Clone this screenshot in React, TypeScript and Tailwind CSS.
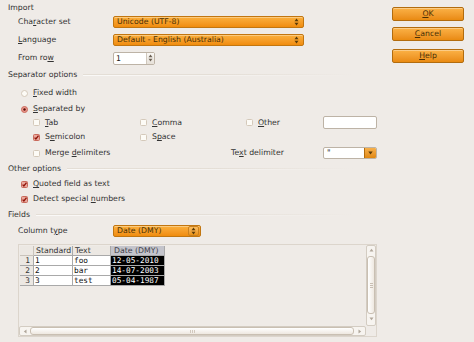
import React from "react";

function U({ children }: { children: React.ReactNode }) {
  return <span className="underline underline-offset-[1px] decoration-[0.5px]">{children}</span>;
}

function UpDown({ color = "#5a3a08" }: { color?: string }) {
  return (
    <svg width="5" height="8" viewBox="0 0 5 8">
      <path d="M0.5 3.2 L2.5 0.6 L4.5 3.2 Z" fill={color} />
      <path d="M0.5 4.8 L2.5 7.4 L4.5 4.8 Z" fill={color} />
    </svg>
  );
}

function Checkbox({ checked }: { checked?: boolean }) {
  return (
    <svg width="7" height="7" viewBox="0 0 7 7" className="shrink-0">
      <rect
        x="0.5"
        y="0.5"
        width="6"
        height="6"
        rx="1"
        fill={checked ? "#e9a89c" : "#fdfbf6"}
        stroke={checked ? "#c96a5c" : "#d4c9ba"}
      />
      {checked && <path d="M1.6 3.6 L2.9 5 L5.5 1.6" stroke="#8e1208" strokeWidth="1.3" fill="none" />}
    </svg>
  );
}

function Radio({ checked }: { checked?: boolean }) {
  return (
    <svg width="7" height="7" viewBox="0 0 7 7" className="shrink-0">
      <circle cx="3.5" cy="3.5" r="3" fill={checked ? "#ec9a90" : "#fdfbf6"} stroke={checked ? "#c96a5c" : "#d4c9ba"} />
      {checked && <circle cx="3.5" cy="3.5" r="1.2" fill="#5a0d06" />}
    </svg>
  );
}

function Header({ children }: { children: React.ReactNode }) {
  return (
    <div className="flex h-[16px] items-center">
      <span>{children}</span>
      <div className="ml-[6px] mr-[24px] flex-1">
        <div className="h-px bg-gradient-to-r from-[#e4ded6] via-[#e4ded6] to-transparent" />
        <div className="h-px bg-gradient-to-r from-white/70 to-transparent" />
      </div>
    </div>
  );
}

function Combo({ text, width }: { text: string; width: string }) {
  return (
    <div
      className={`${width} flex h-[12px] items-center justify-between rounded-[2px] border border-[#c27610] bg-gradient-to-b from-[#fbb03c] to-[#f08c0c] pl-[3px] pr-[4px] text-[#4a2f05] shadow-[inset_0_1px_0_rgba(255,255,255,0.35)]`}
    >
      <span className="leading-none">{text}</span>
      <UpDown />
    </div>
  );
}

function Button({ children }: { children: React.ReactNode }) {
  return (
    <div className="flex h-[14px] w-[72px] items-center justify-center rounded-[2px] border border-[#b26c0e] bg-gradient-to-b from-[#fbb245] to-[#e98a0f] text-[#4a2f05] shadow-[inset_0_1px_0_rgba(255,255,255,0.35)]">
      {children}
    </div>
  );
}

const cell = "shrink-0 overflow-hidden whitespace-nowrap border-r border-b border-[#a9a9a9] leading-[9px]";
const mono = "font-['DejaVu_Sans_Mono',monospace]";

const rows = [
  ["1", "1", "foo", "12-05-2010"],
  ["2", "2", "bar", "14-07-2003"],
  ["3", "3", "test", "05-04-1987"],
];

export default function App() {
  return (
    <div className="flex h-[342px] w-[474px] bg-[#efebe7] font-['DejaVu_Sans',sans-serif] text-[7.75px] text-[#333]">
      <div className="w-[377px] shrink-0 pl-[8px] pt-px">
        <div className="flex h-[14px] items-center">
          <span>Import</span>
        </div>

        <div className="flex h-[14px] items-center pl-[10px]">
          <span className="w-[95px]">
            Cha<U>r</U>acter set
          </span>
          <Combo text="Unicode (UTF-8)" width="w-[191px]" />
        </div>
        <div className="mt-[4px] flex h-[14px] items-center pl-[10px]">
          <span className="w-[95px]">
            <U>L</U>anguage
          </span>
          <Combo text="Default - English (Australia)" width="w-[191px]" />
        </div>
        <div className="mt-[4px] flex h-[14px] items-center pl-[10px]">
          <span className="w-[95px]">
            From ro<U>w</U>
          </span>
          <div className="flex h-[13px] w-[42px] rounded-[2px] border border-[#bdb3a6] bg-white">
            <span className="flex-1 pl-[2px] leading-[11px] text-[#222]">1</span>
            <div className="flex w-[8px] items-center justify-center border-l border-[#cfc7bc] bg-gradient-to-b from-[#faf8f5] to-[#e6e0d8]">
              <UpDown color="#6b6054" />
            </div>
          </div>
        </div>

        <div className="mt-[2px]">
          <Header>Separator options</Header>
        </div>
        <div className="mt-[3px] flex h-[14px] items-center gap-[5px] pl-[13px]">
          <Radio />
          <span>
            <U>F</U>ixed width
          </span>
        </div>
        <div className="mt-[2px] flex h-[14px] items-center gap-[5px] pl-[13px]">
          <Radio checked />
          <span>
            <U>S</U>eparated by
          </span>
        </div>

        <div className="flex h-[13px] items-center pl-[25px]">
          <div className="flex w-[107px] items-center gap-[5px]">
            <Checkbox />
            <span>
              <U>T</U>ab
            </span>
          </div>
          <div className="flex w-[106px] items-center gap-[5px]">
            <Checkbox />
            <span>
              <U>C</U>omma
            </span>
          </div>
          <div className="flex w-[77px] items-center gap-[5px]">
            <Checkbox />
            <span>
              <U>O</U>ther
            </span>
          </div>
          <div className="h-[13px] w-[54px] rounded-[2px] border border-[#bdb3a6] bg-white" />
        </div>
        <div className="mt-px flex h-[14px] items-center pl-[25px]">
          <div className="flex w-[107px] items-center gap-[5px]">
            <Checkbox checked />
            <span>
              S<U>e</U>micolon
            </span>
          </div>
          <div className="flex w-[106px] items-center gap-[5px]">
            <Checkbox />
            <span>
              S<U>p</U>ace
            </span>
          </div>
        </div>
        <div className="mt-[2px] flex h-[14px] items-center pl-[25px]">
          <div className="flex w-[198px] items-center gap-[5px]">
            <Checkbox />
            <span>
              Merge <U>d</U>elimiters
            </span>
          </div>
          <span className="w-[92px]">
            Te<U>x</U>t delimiter
          </span>
          <div className="flex h-[12px] w-[54px] rounded-[2px] border border-[#bdb3a6] bg-white">
            <span className="flex-1 pl-[3px] leading-[10px] text-[#222]">"</span>
            <div className="flex w-[12px] items-center justify-center rounded-r-[1px] border-l border-[#b26c0e] bg-gradient-to-b from-[#f7b04a] to-[#e0880f]">
              <svg width="5" height="4" viewBox="0 0 5 4">
                <path d="M0.3 0.5 L4.7 0.5 L2.5 3.6 Z" fill="#5a3a08" />
              </svg>
            </div>
          </div>
        </div>

        <div className="mt-[1px]">
          <Header>Other options</Header>
        </div>
        <div className="flex h-[14px] items-center gap-[5px] pl-[13px]">
          <Checkbox checked />
          <span>
            <U>Q</U>uoted field as text
          </span>
        </div>
        <div className="mt-px flex h-[14px] items-center gap-[5px] pl-[13px]">
          <Checkbox checked />
          <span>
            Detect special <U>n</U>umbers
          </span>
        </div>

        <div className="mt-[1px]">
          <Header>Fields</Header>
        </div>
        <div className="flex h-[15px] items-center pl-[10px]">
          <span className="w-[95px]">
            Column t<U>y</U>pe
          </span>
          <div className="flex h-[12px] w-[88px] items-center rounded-[2px] border border-[#c27610] bg-gradient-to-b from-[#fbb03c] to-[#f08c0c] text-[#4a2f05] shadow-[inset_0_1px_0_rgba(255,255,255,0.35)]">
            <span className="flex-1 pl-[3px] leading-none">Date (DMY)</span>
            <div className="mr-px flex h-[10px] w-[11px] items-center justify-center rounded-[2px] border border-[#c98020] bg-gradient-to-b from-[#fbbe60] to-[#eb920f]">
              <UpDown />
            </div>
          </div>
        </div>

        <div className="ml-[10px] mt-[6px] flex h-[93px] w-[359px] flex-col border border-[#dcd5cc]">
          <div className="flex flex-1">
            <div className="flex-1 pl-px pt-px">
              <div className="flex h-[10px]">
                <div className={`${cell} w-[14px] border-r-[#c9c3bb] border-b-[#c9c3bb] bg-[#ece8e3]`} />
                <div className={`${cell} w-[39px] bg-[#ece8e3] pl-[2px]`}>Standard</div>
                <div className={`${cell} w-[38px] bg-[#ece8e3] pl-[2px]`}>Text</div>
                <div className={`${cell} w-[54px] bg-[#c4c4cb] pl-[3px] text-[#3d3d48]`}>Date (DMY)</div>
              </div>
              {rows.map((r) => (
                <div key={r[0]} className={`flex h-[10px] ${mono}`}>
                  <div className={`${cell} w-[14px] bg-[#ece8e3] pr-[3px] text-right`}>{r[0]}</div>
                  <div className={`${cell} w-[39px] bg-white pl-px text-[#111]`}>{r[1]}</div>
                  <div className={`${cell} w-[38px] bg-white pl-px text-[#111]`}>{r[2]}</div>
                  <div className={`${cell} w-[54px] border-[#222] bg-black pl-px text-white`}>{r[3]}</div>
                </div>
              ))}
            </div>
            <div className="flex w-[10px] flex-col items-center rounded-[2px] border border-[#d3ccc2] bg-[#f7f4f0]">
              <svg width="5" height="4" viewBox="0 0 5 4" className="mt-[2px]">
                <path d="M0.5 3.5 L2.5 0.8 L4.5 3.5 Z" fill="#b0a69a" />
              </svg>
              <div className="mt-[4px] flex h-[58px] w-[8px] items-center justify-center rounded-[3px] border border-[#c9bfb2] bg-gradient-to-r from-white to-[#eee8e0]">
                <div className="flex flex-col gap-px">
                  <div className="h-px w-[3px] bg-[#c8beb2]" />
                  <div className="h-px w-[3px] bg-[#c8beb2]" />
                  <div className="h-px w-[3px] bg-[#c8beb2]" />
                </div>
              </div>
              <svg width="5" height="4" viewBox="0 0 5 4" className="mt-[3px]">
                <path d="M0.5 0.5 L2.5 3.2 L4.5 0.5 Z" fill="#b0a69a" />
              </svg>
            </div>
          </div>
          <div className="flex h-[10px]">
            <div className="flex flex-1 items-center rounded-[2px] border border-[#d3ccc2] bg-[#f7f4f0]">
              <div className="flex w-[10px] items-center justify-center">
                <svg width="4" height="5" viewBox="0 0 4 5">
                  <path d="M3.5 0.5 L0.8 2.5 L3.5 4.5 Z" fill="#b0a69a" />
                </svg>
              </div>
              <div className="flex h-[8px] flex-1 items-center justify-center rounded-[3px] border border-[#c9bfb2] bg-gradient-to-b from-white to-[#eee8e0]">
                <div className="flex gap-px">
                  <div className="h-[3px] w-px bg-[#d2c9be]" />
                  <div className="h-[3px] w-px bg-[#d2c9be]" />
                  <div className="h-[3px] w-px bg-[#d2c9be]" />
                </div>
              </div>
              <div className="flex w-[11px] items-center justify-center">
                <svg width="4" height="5" viewBox="0 0 4 5">
                  <path d="M0.5 0.5 L3.2 2.5 L0.5 4.5 Z" fill="#b0a69a" />
                </svg>
              </div>
            </div>
            <div className="w-[10px]" />
          </div>
        </div>
      </div>

      <div className="ml-[15px] flex flex-col pt-[7px]">
        <Button>
          <U>O</U>K
        </Button>
        <div className="mt-[6px]">
          <Button>
            <U>C</U>ancel
          </Button>
        </div>
        <div className="mt-[8px]">
          <Button>
            <U>H</U>elp
          </Button>
        </div>
      </div>
    </div>
  );
}
